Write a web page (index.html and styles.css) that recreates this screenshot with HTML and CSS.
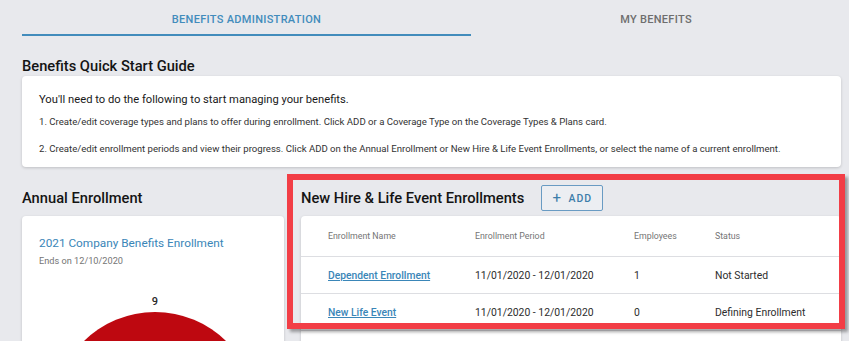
FILE: index.html
```html
<!DOCTYPE html>
<html lang="en">
<head>
  <meta charset="UTF-8">
  <title>Benefits Administration</title>
  <link rel="stylesheet" href="styles.css">
</head>
<body>
<div class="page">

  <!-- tabs -->
  <div class="tabs">
    <div class="tab active">Benefits Administration</div>
    <div class="tab tab-second">My Benefits</div>
  </div>

  <!-- quick start guide -->
  <h2 class="section-title guide-title">Benefits Quick Start Guide</h2>
  <div class="card guide">
    <p class="guide-lead">You'll need to do the following to start managing your benefits.</p>
    <p class="guide-step">1. Create/edit coverage types and plans to offer during enrollment. Click ADD or a Coverage Type on the Coverage Types &amp; Plans card.</p>
    <p class="guide-step">2. Create/edit enrollment periods and view their progress. Click ADD on the Annual Enrollment or New Hire &amp; Life Event Enrollments, or select the name of a current enrollment.</p>
  </div>

  <div class="columns">

    <!-- annual enrollment -->
    <div class="col">
      <div class="col-head">
        <h2 class="section-title">Annual Enrollment</h2>
      </div>
      <div class="card annual">
        <a class="annual-name" href="#">2021 Company Benefits Enrollment</a>
        <div class="annual-ends">Ends on 12/10/2020</div>
        <div class="chart">
          <div class="chart-label">9</div>
          <div class="pie"></div>
        </div>
      </div>
    </div>

    <!-- new hire & life event -->
    <div class="col col-events">
      <div class="col-head">
        <h2 class="section-title">New Hire &amp; Life Event Enrollments</h2>
        <button class="add-btn" type="button"><span class="plus">+</span> ADD</button>
      </div>
      <div class="card events">
        <div class="row row-head">
          <div>Enrollment Name</div>
          <div>Enrollment Period</div>
          <div>Employees</div>
          <div>Status</div>
        </div>
        <div class="row">
          <div><a href="#">Dependent Enrollment</a></div>
          <div>11/01/2020 - 12/01/2020</div>
          <div>1</div>
          <div>Not Started</div>
        </div>
        <div class="row">
          <div><a href="#">New Life Event</a></div>
          <div>11/01/2020 - 12/01/2020</div>
          <div>0</div>
          <div>Defining Enrollment</div>
        </div>
      </div>
      <div class="highlight"></div>
    </div>

  </div>
</div>
</body>
</html>
```

FILE: styles.css
```css
:root{
  --page-bg: rgb(232, 233, 237);
  --blue: rgb(58, 134, 184);
  --text: rgb(33, 33, 33);
  --muted: rgb(117, 117, 117);
  --line: rgb(221, 222, 226);
  --red-mark: rgb(242, 62, 70);
  --pie-red: rgb(190, 8, 16);
}

body{
  margin: 0;
  background-color: var(--page-bg);
  font-family: Roboto, 'Liberation Sans', sans-serif;
  color: var(--text);
  overflow: hidden;
}

.page{
  padding: 0 8px 0 22px;
}

/* tabs */
.tabs{
  display: flex;
  height: 36px;
}

.tab{
  width: 449px;
  box-sizing: border-box;
  padding-top: 13px;
  text-align: center;
  font-size: 11px;
  font-weight: 500;
  letter-spacing: 0.3px;
  text-transform: uppercase;
  color: rgb(110, 110, 110);
}

.tab.active{
  color: rgb(66, 140, 188);
  border-bottom: 2px solid rgb(66, 140, 188);
}

.tab-second{
  width: 370px;
}

/* section headings */
.section-title{
  margin: 0;
  font-size: 14.7px;
  font-weight: 500;
  color: rgb(20, 20, 20);
}

.guide-title{
  padding-top: 21px;
  height: 40px;
  box-sizing: border-box;
}

.card{
  background-color: #fff;
  border-radius: 4px;
  box-shadow: 0 1px 3px rgba(0, 0, 0, 0.18);
}

/* quick start guide */
.guide{
  width: 819px;
  height: 91px;
  box-sizing: border-box;
  padding: 17px 17px 0;
}

.guide p{
  margin: 0;
}

.guide-lead{
  font-size: 11.2px;
  line-height: 14px;
  color: rgb(25, 25, 25);
}

.guide-step{
  margin-top: 8px !important;
  font-size: 9.6px;
  color: rgb(50, 50, 50);
  line-height: 14px;
}

.guide-step + .guide-step{
  margin-top: 13px !important;
}

/* lower columns */
.columns{
  display: grid;
  grid-template-columns: 262px 540px;
  column-gap: 17px;
  margin-top: 13px;
}

.col-head{
  display: flex;
  align-items: center;
  gap: 17px;
  height: 36px;
}

.col-events{
  position: relative;
}

/* annual enrollment */
.annual{
  height: 140px;
  box-sizing: border-box;
  padding: 20px 17px 0;
  overflow: hidden;
  border-radius: 4px 4px 0 0;
}

.annual-name{
  display: block;
  font-size: 11.8px;
  color: var(--blue);
  text-decoration: none;
}

.annual-ends{
  margin-top: 5px;
  font-size: 9.2px;
  color: var(--muted);
}

.chart{
  display: flex;
  flex-direction: column;
  align-items: center;
  margin-top: 29px;
  width: 232px;
}

.chart-label{
  font-size: 11px;
  font-weight: 500;
  color: rgb(40, 40, 40);
  line-height: 14px;
}

.pie{
  margin-top: 3px;
  width: 204px;
  height: 204px;
  border-radius: 50%;
  background-color: var(--pie-red);
}

/* new hire & life event */
.add-btn{
  height: 26px;
  width: 62px;
  border: 1px solid rgb(105, 155, 195);
  border-radius: 2px;
  background-color: rgb(236, 238, 242);
  color: rgb(60, 125, 170);
  font-family: Roboto, 'Liberation Sans', sans-serif;
  font-size: 10.5px;
  font-weight: 500;
  letter-spacing: 1px;
  padding: 0;
}

.add-btn .plus{
  font-size: 15px;
  font-weight: 400;
  vertical-align: -1px;
  margin-right: 3px;
}

.events{
  height: 140px;
  border-radius: 4px 4px 0 0;
}

.row{
  display: grid;
  grid-template-columns: 147px 159px 81px 1fr;
  align-items: center;
  padding-left: 27px;
  height: 36px;
  border-bottom: 1px solid var(--line);
  font-size: 10.4px;
  color: rgb(45, 45, 45);
}

.row-head{
  height: 40px;
  font-size: 8.8px;
  color: var(--muted);
}

.row a{
  font-size: 10.3px;
  color: var(--blue);
  font-weight: 500;
}

/* annotation box drawn over the card */
.highlight{
  position: absolute;
  left: -14px;
  top: -6px;
  width: 546px;
  height: 143px;
  border: 6px solid var(--red-mark);
  box-shadow: 3px 3px 3px rgba(0, 0, 0, 0.35);
}
```
